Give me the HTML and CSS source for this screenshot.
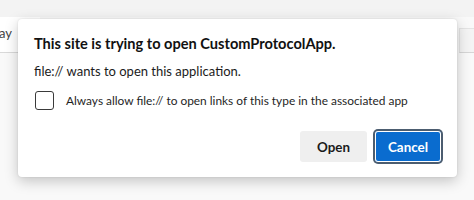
FILE: index.html
```html
<!DOCTYPE html>
<html lang="en">
<head>
    <meta charset="UTF-8">
    <title>Open external application</title>
    <link rel="stylesheet" href="styles.css">
</head>
<body>

<!-- Browser page behind the dialog -->
<div class="page">
    <div class="topbar"></div>
    <div class="page-row">
        <div class="side-tab"><span>ay</span></div>
        <div class="page-gap"></div>
        <div class="side-box"></div>
    </div>
</div>

<!-- Protocol dialog -->
<div class="dialog">
    <h1 class="dialog-title">This site is trying to open CustomProtocolApp.</h1>
    <p class="dialog-text">file:// wants to open this application.</p>
    <label class="check-row">
        <span class="checkbox"></span>
        <span class="check-label">Always allow file:// to open links of this type in the associated app</span>
    </label>
    <div class="buttons">
        <button class="btn btn-open">Open</button>
        <button class="btn btn-cancel">Cancel</button>
    </div>
</div>

</body>
</html>
```

FILE: styles.css
```css
/* Global */
body {
    margin: 0;
    width: 474px;
    height: 200px;
    overflow: hidden;
    position: relative;
    background: #f9f9f9;
    font-family: Lato, "Open Sans", sans-serif;
    color: #1b1b1b;
}

/* Page behind */
.topbar {
    height: 17px;
    background: #f3f3f3;
}

.page-row {
    display: flex;
    height: 36px;
}

.side-tab {
    width: 40px;
    background: #ffffff;
    border-bottom: 1px solid #d9d9d9;
    font-size: 13px;
    color: #444;
    padding-top: 8px;
    box-sizing: border-box;
}

.side-tab span {
    margin-left: -1px;
}

.page-gap {
    flex: 1;
}

.side-box {
    width: 14px;
    margin-top: 11px;
    border-top: 1px solid #e4e4e4;
    border-left: 1px solid #e4e4e4;
    border-bottom: 1px solid #d6d6d6;
    background: #f4f4f4;
}

/* Dialog */
.dialog {
    position: absolute;
    left: 18px;
    top: 19px;
    width: 439px;
    height: 158px;
    box-sizing: border-box;
    padding: 15px 16px 0 16px;
    background: #ffffff;
    border-radius: 4px;
    box-shadow: 0 4px 14px rgba(0, 0, 0, 0.22), 0 0 2px rgba(0, 0, 0, 0.12);
}

.dialog-title {
    margin: 0;
    font-size: 14.6px;
    font-weight: 700;
    line-height: 20px;
    color: #111;
}

.dialog-text {
    margin: 7px 0 0 0;
    font-size: 13px;
    line-height: 20px;
}

/* Checkbox row */
.check-row {
    display: flex;
    align-items: center;
    margin-top: 10px;
}

.checkbox {
    width: 17px;
    height: 17px;
    border: 1px solid #3a3a3a;
    border-radius: 3px;
    margin-left: 1px;
}

.check-label {
    margin-left: 12px;
    font-size: 11.9px;
    color: #1f1f1f;
}

/* Buttons */
.buttons {
    display: flex;
    justify-content: flex-end;
    gap: 8px;
    margin-top: 21px;
}

.btn {
    height: 31px;
    border: none;
    border-radius: 3px;
    font-family: inherit;
    font-size: 13.4px;
    font-weight: 700;
    cursor: pointer;
}

.btn-open {
    width: 67px;
    background: #efefef;
    color: #1b1b1b;
}

.btn-cancel {
    width: 66px;
    background: #0a6ccf;
    color: #ffffff;
    box-shadow: 0 0 0 1px #ffffff inset, 0 0 0 2px #4c5d70;
}
```
